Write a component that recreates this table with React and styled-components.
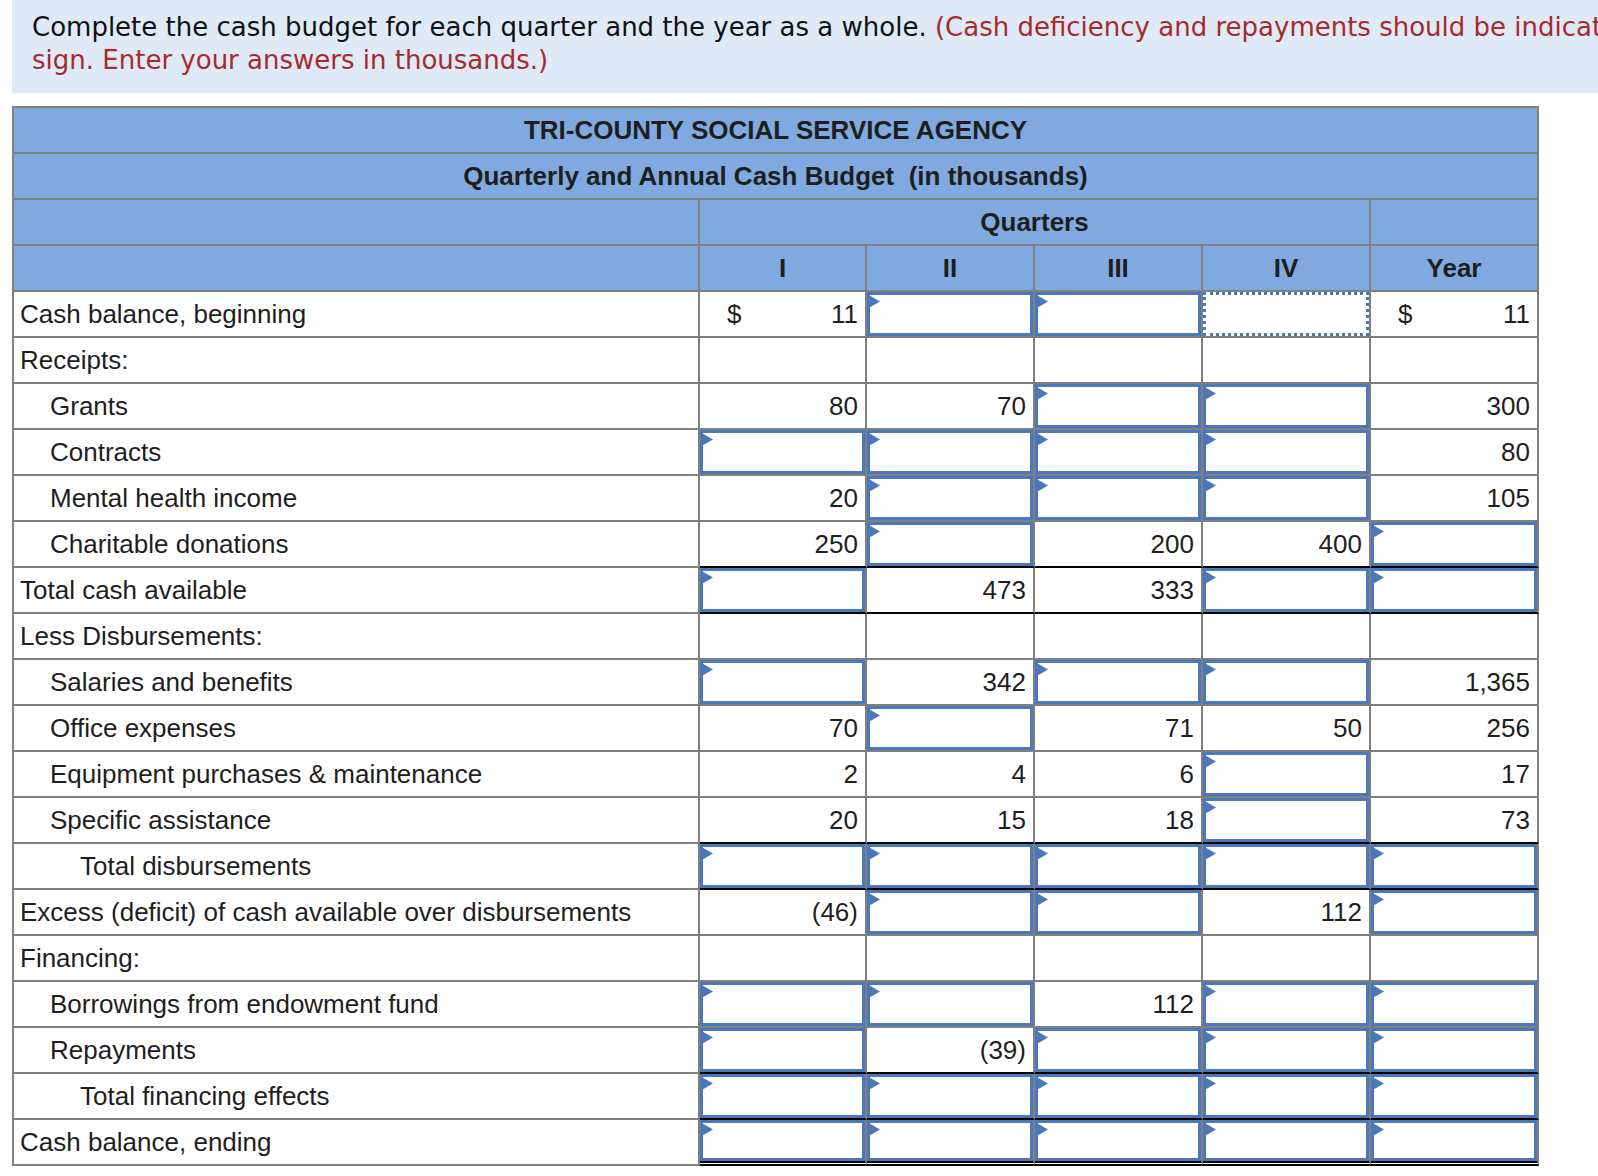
import React from 'react';
import styled, { createGlobalStyle } from 'styled-components';

const GlobalStyle = createGlobalStyle`
  html, body {
    margin: 0;
    padding: 0;
    background: #ffffff;
    overflow: hidden;
  }
  body {
    font-family: "Liberation Sans", Arial, sans-serif;
  }
`;

const Page = styled.div`
  padding: 0 0 0 12px;
`;

const Instructions = styled.div`
  width: 1700px;
  height: 93px;
  box-sizing: border-box;
  padding: 11px 0 0 20px;
  background: #deeaf7;
  font-family: "DejaVu Sans", Verdana, sans-serif;
  font-size: 26px;
  line-height: 32.6px;
  color: #111111;
  white-space: nowrap;
`;

const Note = styled.span`
  color: #a82a2a;
`;

const Grid = styled.div`
  margin-top: 13px;
  display: grid;
  grid-template-columns: 686px 167px 168px 168px 168px 168px;
  width: max-content;
  border-top: 2px solid #808080;
  border-left: 2px solid #808080;
  font-size: 26px;
  color: #1e1e1e;
`;

const HeadCell = styled.div`
  grid-column: span ${(p) => p.$span || 1};
  height: 46px;
  box-sizing: border-box;
  background: #80aadf;
  border-right: 2px solid #808080;
  border-bottom: 2px solid #808080;
  display: flex;
  align-items: center;
  justify-content: center;
  font-weight: bold;
  white-space: pre;
`;

const ruleBorder = (rule) =>
  rule === 'single'
    ? '2px solid #000000'
    : rule === 'double'
    ? '5px double #000000'
    : '2px solid #808080';

const LabelCell = styled.div`
  height: 46px;
  box-sizing: border-box;
  border-right: 2px solid #808080;
  border-bottom: 2px solid #808080;
  display: flex;
  align-items: center;
  padding-left: ${(p) => 6 + p.$indent * 30}px;
  white-space: nowrap;
`;

const Cell = styled.div`
  height: 46px;
  box-sizing: border-box;
  border-right: 2px solid #808080;
  border-bottom: ${(p) => ruleBorder(p.$rule)};
  display: flex;
  align-items: center;
  justify-content: ${(p) => (p.$dollar ? 'space-between' : 'flex-end')};
  padding: ${(p) => (p.$input ? '0' : p.$dollar ? '0 7px 0 27px' : '0 7px')};
`;

const InputBox = styled.div`
  position: relative;
  align-self: stretch;
  flex: 1;
  box-sizing: border-box;
  background: #ffffff;
  border: 3px ${(p) => (p.$dotted ? 'dotted' : 'solid')} #4a78bb;
`;

const Flag = styled.span`
  position: absolute;
  left: -3px;
  top: -1px;
  z-index: 1;
  display: block;
  width: 13px;
  height: 15px;
  background: #4a78bb;
  clip-path: polygon(0 0, 100% 50%, 0 100%);
`;

const rows = [
  { label: 'Cash balance, beginning', indent: 0, cells: ['$11', 'in', 'in', 'dot', '$11'] },
  { label: 'Receipts:', indent: 0, cells: ['', '', '', '', ''] },
  { label: 'Grants', indent: 1, cells: ['80', '70', 'in', 'in', '300'] },
  { label: 'Contracts', indent: 1, cells: ['in', 'in', 'in', 'in', '80'] },
  { label: 'Mental health income', indent: 1, cells: ['20', 'in', 'in', 'in', '105'] },
  { label: 'Charitable donations', indent: 1, cells: ['250', 'in', '200', '400', 'in'], rule: 'single' },
  { label: 'Total cash available', indent: 0, cells: ['in', '473', '333', 'in', 'in'], rule: 'single' },
  { label: 'Less Disbursements:', indent: 0, cells: ['', '', '', '', ''] },
  { label: 'Salaries and benefits', indent: 1, cells: ['in', '342', 'in', 'in', '1,365'] },
  { label: 'Office expenses', indent: 1, cells: ['70', 'in', '71', '50', '256'] },
  { label: 'Equipment purchases & maintenance', indent: 1, cells: ['2', '4', '6', 'in', '17'] },
  { label: 'Specific assistance', indent: 1, cells: ['20', '15', '18', 'in', '73'], rule: 'single' },
  { label: 'Total disbursements', indent: 2, cells: ['in', 'in', 'in', 'in', 'in'], rule: 'single' },
  { label: 'Excess (deficit) of cash available over disbursements', indent: 0, cells: ['(46)', 'in', 'in', '112', 'in'] },
  { label: 'Financing:', indent: 0, cells: ['', '', '', '', ''] },
  { label: 'Borrowings from endowment fund', indent: 1, cells: ['in', 'in', '112', 'in', 'in'] },
  { label: 'Repayments', indent: 1, cells: ['in', '(39)', 'in', 'in', 'in'], rule: 'single' },
  { label: 'Total financing effects', indent: 2, cells: ['in', 'in', 'in', 'in', 'in'], rule: 'single' },
  { label: 'Cash balance, ending', indent: 0, cells: ['in', 'in', 'in', 'in', 'in'], rule: 'double' },
];

function DataCell({ value, rule }) {
  if (value === 'in' || value === 'dot') {
    const dotted = value === 'dot';
    return (
      <Cell $input $rule={rule}>
        <InputBox $dotted={dotted}>{!dotted && <Flag />}</InputBox>
      </Cell>
    );
  }
  if (value.startsWith('$')) {
    return (
      <Cell $dollar $rule={rule}>
        <span>$</span>
        <span>{value.slice(1)}</span>
      </Cell>
    );
  }
  return <Cell $rule={rule}>{value}</Cell>;
}

export default function App() {
  return (
    <>
      <GlobalStyle />
      <Page>
        <Instructions>
          Complete the cash budget for each quarter and the year as a whole.{' '}
          <Note>(Cash deficiency and repayments should be indicated by a minus</Note>
          <br />
          <Note>sign. Enter your answers in thousands.)</Note>
        </Instructions>
        <Grid>
          <HeadCell $span={6}>TRI-COUNTY SOCIAL SERVICE AGENCY</HeadCell>
          <HeadCell $span={6}>{'Quarterly and Annual Cash Budget  (in thousands)'}</HeadCell>
          <HeadCell />
          <HeadCell $span={4}>Quarters</HeadCell>
          <HeadCell />
          <HeadCell />
          <HeadCell>I</HeadCell>
          <HeadCell>II</HeadCell>
          <HeadCell>III</HeadCell>
          <HeadCell>IV</HeadCell>
          <HeadCell>Year</HeadCell>
          {rows.map((row) => (
            <React.Fragment key={row.label}>
              <LabelCell $indent={row.indent}>{row.label}</LabelCell>
              {row.cells.map((c, i) => (
                <DataCell key={i} value={c} rule={row.rule} />
              ))}
            </React.Fragment>
          ))}
        </Grid>
      </Page>
    </>
  );
}
